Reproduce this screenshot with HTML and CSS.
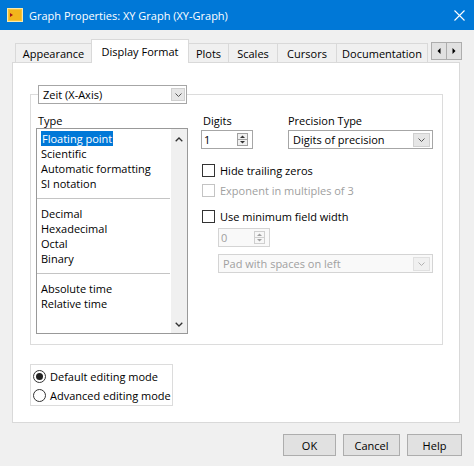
FILE: index.html
```html
<!DOCTYPE html>
<html lang="en">
<head>
    <meta charset="UTF-8">
    <title>Graph Properties: XY Graph (XY-Graph)</title>
    <link rel="stylesheet" href="styles.css">
</head>
<body>
    <!-- Barra de titulo -->
    <div class="titlebar">
        <svg class="app-icon" width="16" height="14" viewBox="0 0 16 14">
            <rect x="0.5" y="0.5" width="15" height="13" fill="#f5c33b" stroke="#fbe9a8"/>
            <rect x="2" y="2" width="12" height="10" fill="#f2b51c"/>
            <path d="M3 5 L6 7 L3 9 Z" fill="#a3141b"/>
        </svg>
        <span class="title">Graph Properties: XY Graph (XY-Graph)</span>
        <span class="close">
            <svg width="11" height="11" viewBox="0 0 11 11"><path d="M0.5 0.5 L10.5 10.5 M10.5 0.5 L0.5 10.5" stroke="#fff" stroke-width="1.1"/></svg>
        </span>
    </div>

    <!-- Pestañas -->
    <div class="tabstrip">
        <div class="tab tab-appearance">Appearance</div>
        <div class="tab tab-display active">Display Format</div>
        <div class="tab tab-plots">Plots</div>
        <div class="tab tab-scales">Scales</div>
        <div class="tab tab-cursors">Cursors</div>
        <div class="tab tab-doc">Documentation</div>
        <div class="tab-arrows">
            <div class="arrow"><svg width="4" height="6" viewBox="0 0 4 6"><path d="M3.5 0 L0.5 3 L3.5 6 Z" fill="#000"/></svg></div>
            <div class="arrow"><svg width="4" height="6" viewBox="0 0 4 6"><path d="M0.5 0 L3.5 3 L0.5 6 Z" fill="#000"/></svg></div>
        </div>
    </div>

    <div class="panel">
        <fieldset class="format-group">
            <legend>
                <div class="dropdown axis">
                    <span class="dd-text">Zeit (X-Axis)</span>
                    <span class="drop-btn small"><svg width="7" height="4" viewBox="0 0 7 4"><polyline points="0.5,0.5 3.5,3.5 6.5,0.5" fill="none" stroke="#555"/></svg></span>
                </div>
            </legend>

            <div class="group-body">
                <!-- Lista de tipos -->
                <div class="type-col">
                    <div class="field-label">Type</div>
                    <div class="listbox">
                        <div class="list-items">
                            <div class="list-item selected"><span>Floating point</span></div>
                            <div class="list-item">Scientific</div>
                            <div class="list-item">Automatic formatting</div>
                            <div class="list-item">SI notation</div>
                            <div class="list-sep"><div class="sep-line"></div></div>
                            <div class="list-item">Decimal</div>
                            <div class="list-item">Hexadecimal</div>
                            <div class="list-item">Octal</div>
                            <div class="list-item">Binary</div>
                            <div class="list-sep"><div class="sep-line"></div></div>
                            <div class="list-item">Absolute time</div>
                            <div class="list-item">Relative time</div>
                        </div>
                        <div class="list-scroll">
                            <svg width="8" height="5" viewBox="0 0 8 5"><polyline points="0.7,4.3 4,1 7.3,4.3" fill="none" stroke="#333" stroke-width="1.3"/></svg>
                            <svg width="8" height="5" viewBox="0 0 8 5"><polyline points="0.7,0.7 4,4 7.3,0.7" fill="none" stroke="#333" stroke-width="1.3"/></svg>
                        </div>
                    </div>
                </div>

                <!-- Opciones -->
                <div class="options">
                    <div class="options-top">
                        <div class="digits-col">
                            <div class="field-label">Digits</div>
                            <div class="spinner">
                                <span class="sp-text">1</span>
                                <svg class="spin-btn" width="11" height="13" viewBox="0 0 11 13">
                                    <rect x="0.5" y="0.5" width="10" height="12" fill="#f0f0f0" stroke="#a0a0a0"/>
                                    <line x1="1" y1="6.5" x2="10" y2="6.5" stroke="#a0a0a0"/>
                                    <path d="M3 5 L5.5 2.5 L8 5 Z" fill="#333"/>
                                    <path d="M3 8 L5.5 10.5 L8 8 Z" fill="#333"/>
                                </svg>
                            </div>
                        </div>
                        <div class="precision-col">
                            <div class="field-label">Precision Type</div>
                            <div class="dropdown precision">
                                <span class="dd-text">Digits of precision</span>
                                <span class="drop-btn"><svg width="7" height="4" viewBox="0 0 7 4"><polyline points="0.5,0.5 3.5,3.5 6.5,0.5" fill="none" stroke="#555"/></svg></span>
                            </div>
                        </div>
                    </div>

                    <div class="check-row row-hide"><span class="checkbox"></span>Hide trailing zeros</div>
                    <div class="check-row row-exp disabled"><span class="checkbox"></span>Exponent in multiples of 3</div>
                    <div class="check-row row-min"><span class="checkbox"></span>Use minimum field width</div>

                    <div class="spinner small-spin disabled">
                        <span class="sp-text">0</span>
                        <svg class="spin-btn" width="11" height="13" viewBox="0 0 11 13">
                            <rect x="0.5" y="0.5" width="10" height="12" fill="#f7f7f7" stroke="#cfcfcf"/>
                            <line x1="1" y1="6.5" x2="10" y2="6.5" stroke="#cfcfcf"/>
                            <path d="M3 5 L5.5 2.5 L8 5 Z" fill="#a0a0a0"/>
                            <path d="M3 8 L5.5 10.5 L8 8 Z" fill="#a0a0a0"/>
                        </svg>
                    </div>
                    <div class="dropdown pad disabled">
                        <span class="dd-text">Pad with spaces on left</span>
                        <span class="drop-btn"><svg width="7" height="4" viewBox="0 0 7 4"><polyline points="0.5,0.5 3.5,3.5 6.5,0.5" fill="none" stroke="#b0b0b0"/></svg></span>
                    </div>
                </div>
            </div>
        </fieldset>

        <div class="mode-group">
            <div class="radio-row"><span class="radio checked"></span>Default editing mode</div>
            <div class="radio-row"><span class="radio"></span>Advanced editing mode</div>
        </div>
    </div>

    <div class="buttons">
        <button class="btn btn-ok">OK</button>
        <button class="btn btn-cancel">Cancel</button>
        <button class="btn btn-help">Help</button>
    </div>
</body>
</html>
```

FILE: styles.css
```css
* {
    box-sizing: border-box;
}
body {
    margin: 0;
    width: 474px;
    height: 466px;
    overflow: hidden;
    background-color: #f0f0f0;
    font-family: "Open Sans", "Noto Sans", sans-serif;
    font-size: 11px;
    line-height: 15px;
    color: #000;
}

/* barra de titulo */
.titlebar {
    height: 30px;
    display: flex;
    align-items: center;
    padding-left: 7px;
    background-color: #0078d7;
    color: #fff;
    font-size: 11px;
}
.app-icon {
    margin-right: 6px;
}
.title {
    flex: 1;
}
.close {
    width: 30px;
    display: flex;
    justify-content: center;
}

/* pestañas */
.tabstrip {
    display: flex;
    align-items: flex-end;
    height: 23px;
    margin: 9px 0 0 15px;
}
.tab {
    height: 19px;
    display: flex;
    align-items: center;
    justify-content: center;
    margin-right: -1px;
    border: 1px solid #d9d9d9;
    border-bottom: none;
    background-color: #f0f0f0;
}
.tab.active {
    height: 24px;
    margin-bottom: -1px;
    background-color: #fff;
    position: relative;
    z-index: 1;
}
.tab-appearance { width: 77px; }
.tab-display { width: 98px; }
.tab-plots { width: 41px; }
.tab-scales { width: 50px; }
.tab-cursors { width: 60px; }
.tab-doc { width: 92px; }
.tab-arrows {
    display: flex;
    margin: 0 0 2px 4px;
}
.arrow {
    width: 16px;
    height: 18px;
    display: flex;
    align-items: center;
    justify-content: center;
    border: 1px solid #adadad;
    background-color: #e1e1e1;
}
.arrow + .arrow {
    margin-left: -1px;
}

/* panel */
.panel {
    width: 448px;
    height: 361px;
    margin-left: 12px;
    border: 1px solid #d9d9d9;
    background-color: #fff;
}
.format-group {
    width: 413px;
    min-width: 0;
    margin: 22px 0 0 17px;
    padding: 0 0 10px 5px;
    border: 1px solid #dcdcdc;
}
.format-group legend {
    padding: 0;
    margin-left: 2px;
}
.group-body {
    display: flex;
}
.field-label {
    height: 15px;
    margin-top: 9px;
    padding-left: 2px;
}

/* controles */
.dropdown {
    height: 19px;
    display: flex;
    align-items: center;
    padding-left: 4px;
    border: 1px solid #a6a6a6;
    background-color: #fff;
}
.dd-text {
    flex: 1;
}
.drop-btn {
    width: 17px;
    height: 14px;
    display: flex;
    align-items: center;
    justify-content: center;
    margin-right: 2px;
    border: 1px solid #cfcfcf;
    background-color: #e6e6e6;
}
.drop-btn.small {
    width: 14px;
    height: 13px;
    margin-right: 1px;
}
.axis { width: 149px; }
.precision { width: 145px; margin-top: 2px; }
.pad { width: 215px; margin: 7px 0 0 17px; }

.spinner {
    height: 19px;
    display: flex;
    align-items: center;
    padding-left: 2px;
    border: 1px solid #a6a6a6;
    background-color: #fff;
}
.sp-text {
    flex: 1;
}
.spin-btn {
    margin-right: 4px;
}
.digits-col .spinner {
    width: 52px;
    margin-top: 2px;
}
.small-spin {
    width: 52px;
    margin: 4px 0 0 17px;
}

.disabled {
    color: #a0a0a0;
}
.dropdown.disabled, .spinner.disabled {
    border-color: #d4d4d4;
    background-color: #f9f9f9;
}
.pad .drop-btn {
    border-color: #e0e0e0;
    background-color: #f0f0f0;
}

/* lista */
.type-col {
    width: 152px;
}
.listbox {
    height: 206px;
    display: flex;
    border: 1px solid #999;
}
.list-items {
    flex: 1;
    padding: 2px 0 0 4px;
}
.list-item {
    height: 15px;
    white-space: nowrap;
}
.list-item.selected span {
    padding: 0 1px;
    background-color: #0078d7;
    color: #fff;
}
.list-sep {
    height: 15px;
    display: flex;
    align-items: center;
    margin: 0 1px 0 -4px;
}
.sep-line {
    flex: 1;
    height: 1px;
    background-color: #c4c4c4;
}
.list-scroll {
    width: 16px;
    display: flex;
    flex-direction: column;
    justify-content: space-between;
    align-items: center;
    padding: 8px 0 6px;
    background-color: #f0f0f0;
}

/* opciones */
.options {
    margin-left: 13px;
}
.options-top {
    display: flex;
}
.digits-col {
    width: 52px;
}
.precision-col {
    margin-left: 35px;
}
.precision-col .field-label {
    padding-left: 0;
}
.check-row {
    height: 15px;
    display: flex;
    align-items: center;
    white-space: nowrap;
}
.checkbox {
    width: 13px;
    height: 13px;
    margin: 0 5px 0 1px;
    border: 1px solid #333;
    background-color: #fff;
}
.check-row.disabled .checkbox {
    border-color: #c4c4c4;
}
.row-hide { margin-top: 14px; }
.row-exp { margin-top: 5px; }
.row-min { margin-top: 11px; }

/* modo de edicion */
.mode-group {
    width: 143px;
    height: 42px;
    margin: 19px 0 0 17px;
    padding: 2px 0 0 2px;
    border: 1px solid #dcdcdc;
}
.radio-row {
    height: 19px;
    display: flex;
    align-items: center;
    white-space: nowrap;
}
.radio {
    width: 13px;
    height: 13px;
    display: flex;
    align-items: center;
    justify-content: center;
    margin-right: 4px;
    border: 1px solid #333;
    border-radius: 50%;
    background-color: #fff;
}
.radio.checked::after {
    content: "";
    width: 7px;
    height: 7px;
    border-radius: 50%;
    background-color: #222;
}

/* botones */
.buttons {
    display: flex;
    justify-content: flex-end;
    gap: 7px;
    margin: 11px 12px 0 0;
}
.btn {
    height: 22px;
    padding: 0;
    font-family: inherit;
    font-size: 11px;
    color: #000;
    border: 1px solid #adadad;
    background-color: #e1e1e1;
}
.btn-ok { width: 53px; }
.btn-cancel { width: 57px; }
.btn-help { width: 55px; }
```
